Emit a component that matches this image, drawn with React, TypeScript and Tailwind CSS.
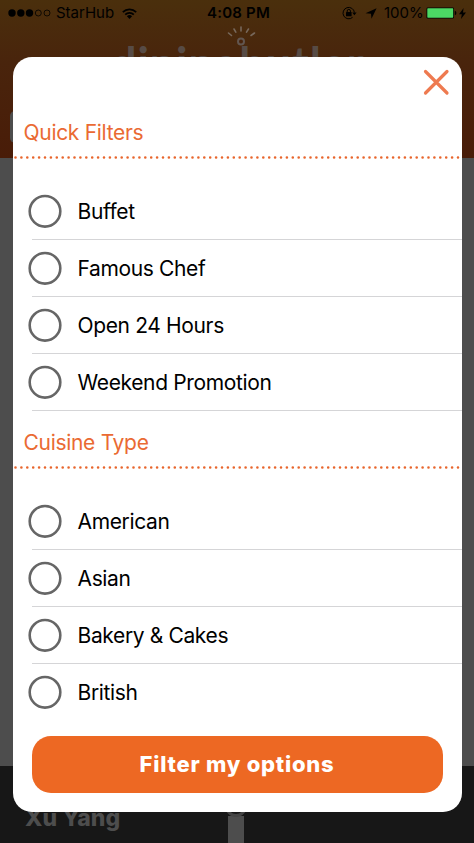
import React, { useState } from "react";

const sections = [
  {
    title: "Quick Filters",
    options: ["Buffet", "Famous Chef", "Open 24 Hours", "Weekend Promotion"],
  },
  {
    title: "Cuisine Type",
    options: ["American", "Asian", "Bakery & Cakes", "British"],
  },
];

function StatusBar() {
  return (
    <div className="flex h-[26px] w-full items-center pl-2 pr-1.5 text-[15px] text-black">
      <svg width="43" height="10" viewBox="0 0 43 10" className="shrink-0">
        <circle cx="4" cy="5" r="3.7" />
        <circle cx="12.8" cy="5" r="3.7" />
        <circle cx="21.5" cy="5" r="3.7" />
        <circle cx="30.3" cy="5" r="3" fill="none" stroke="black" strokeWidth="0.8" />
        <circle cx="39" cy="5" r="3" fill="none" stroke="black" strokeWidth="0.8" />
      </svg>
      <span className="ml-[5px] w-[58px] whitespace-nowrap">StarHub</span>
      <svg width="15" height="11" viewBox="0 0 15 11" className="ml-2 shrink-0">
        <g fill="none" stroke="black" strokeWidth="1.7">
          <path d="M0.8 4.2 A9.5 9.5 0 0 1 14.2 4.2" />
          <path d="M3.2 6.7 A6 6 0 0 1 11.8 6.7" />
        </g>
        <path d="M4.9 8.2 A3.7 3.7 0 0 1 10.1 8.2 L7.5 10.9 Z" />
      </svg>
      <span className="ml-[70px] w-[65px] whitespace-nowrap font-semibold tracking-[0.2px]">
        4:08 PM
      </span>
      <svg width="15" height="14" viewBox="0 0 15 14" className="ml-[70px] shrink-0">
        <path
          d="M12.4 6.5 A5.7 5.7 0 1 0 10.6 11.3"
          fill="none"
          stroke="black"
          strokeWidth="1"
        />
        <path d="M10.2 6.5 H14.6 L12.4 9.2 Z" />
        <rect x="4" y="6" width="5.6" height="4.3" rx="0.5" />
        <path d="M5.2 6 V5 A1.6 1.6 0 0 1 8.4 5 V6" fill="none" stroke="black" strokeWidth="1" />
      </svg>
      <svg width="12" height="11" viewBox="0 0 12 11" className="ml-2 shrink-0">
        <path d="M11.6 0.3 L6.5 10.8 L6 5.7 L0.5 5.2 Z" />
      </svg>
      <span className="ml-[7px] w-[38px] whitespace-nowrap">100%</span>
      <svg width="31" height="12" viewBox="0 0 31 12" className="ml-1 shrink-0">
        <rect x="0.5" y="0.5" width="27.5" height="11" rx="1.2" />
        <rect x="1.3" y="1.3" width="25.9" height="9.4" rx="0.6" fill="#4cd964" />
        <path d="M28.8 3.8 A2.3 2.3 0 0 1 28.8 8.2 Z" />
      </svg>
      <svg width="7" height="11" viewBox="0 0 7 11" className="ml-0.5 shrink-0">
        <path d="M4.6 0 L0 6.2 H2.8 L2 11 L7 4.6 H4 Z" />
      </svg>
    </div>
  );
}

function Logo() {
  return (
    <div className="relative mx-auto mt-3 h-[50px] w-[252px] whitespace-nowrap text-center text-[#574b45]">
      <span className="font-['Lato'] text-[45px] font-bold leading-[50px] tracking-[0.9px]">
        diningbutler
      </span>
      {/* Bell on top of the "b" */}
      <svg
        width="32"
        height="24"
        viewBox="0 0 32 24"
        className="absolute left-[114px] -top-[13px]"
      >
        <g stroke="#77685b" strokeWidth="1.6" strokeLinecap="round">
          <path d="M3.5 8 L6.5 10.5" />
          <path d="M9 4 L10.8 7.2" />
          <path d="M16 2 V6" />
          <path d="M23.5 4 L21.5 7.2" />
          <path d="M29.5 8 L26 10.5" />
        </g>
        <circle cx="16" cy="16.5" r="3" fill="#48230b" stroke="#62564f" strokeWidth="2" />
      </svg>
    </div>
  );
}

function FilterOption({
  label,
  checked,
  divider,
  onToggle,
}: {
  label: string;
  checked: boolean;
  divider: boolean;
  onToggle: () => void;
}) {
  return (
    <button
      type="button"
      onClick={onToggle}
      className="flex h-[57px] w-full flex-col pl-[15px] text-left"
    >
      <span className="flex w-full flex-1 items-center">
        <svg width="34" height="34" viewBox="0 0 34 34" className="shrink-0">
          <circle
            cx="17"
            cy="17.3"
            r="15.3"
            fill={checked ? "#ed6823" : "white"}
            stroke="#666"
            strokeWidth="2.6"
          />
        </svg>
        <span className="ml-4 pt-0.5 text-[21px] tracking-[-0.36px] text-black">{label}</span>
      </span>
      <span
        className={`ml-1 h-px w-full ${divider ? "bg-[#d5d5d7]" : "bg-transparent"}`}
      />
    </button>
  );
}

export default function App() {
  const [selected, setSelected] = useState<string[]>([]);

  const toggle = (option: string) => {
    setSelected((prev) =>
      prev.includes(option) ? prev.filter((o) => o !== option) : [...prev, option]
    );
  };

  return (
    <div className="relative flex h-[843px] w-[474px] flex-col overflow-hidden bg-[#4d4d4d] font-['Inter',sans-serif]">
      {/* Dimmed page */}
      <div className="h-[158px] shrink-0 bg-linear-to-b from-[#4a2f0c] via-[#49240c] via-40% to-[#491c08]">
        <StatusBar />
        <Logo />
        <div className="ml-[10px] mr-[60px] mt-[23px] h-8 rounded-[5px] bg-[#4d4d4d]" />
      </div>
      <div className="flex-1" />
      <div className="flex h-[77px] shrink-0 items-end bg-[#171717]">
        <span className="w-[228px] pb-[9px] pl-[25px] text-[23px] font-extrabold leading-[32px] tracking-[0.1px] text-[#4d4d4d]">
          Xu Yang
        </span>
        <svg width="24" height="34" viewBox="0 0 24 34" className="-ml-[4px]">
          <rect x="4" y="7" width="16" height="27" fill="#4d4d4d" />
          <circle cx="12" cy="-3" r="9.5" fill="#171717" stroke="#444" strokeWidth="3" />
        </svg>
      </div>

      {/* Filter dialog */}
      <div className="absolute inset-x-0 top-[57px] mx-[12.5px] flex h-[754.5px] flex-col overflow-hidden rounded-[19px] bg-white">
        <button type="button" aria-label="Close" className="ml-auto mr-3 mt-3 size-[27px]">
          <svg width="27" height="27" viewBox="0 0 27 27">
            <path
              d="M2.5 2.5 L24 24 M24 2.5 L2.5 24"
              stroke="#ee7a50"
              strokeWidth="3.2"
              strokeLinecap="round"
            />
          </svg>
        </button>
        {sections.map((section, s) => (
          <div key={section.title}>
            <h2
              className={`pl-[11px] text-[21px] leading-[30px] tracking-[-0.3px] text-[#ea6a33] ${
                s === 0 ? "pt-[22px]" : "pt-[17px]"
              }`}
            >
              {section.title}
            </h2>
            <svg width="449" height="3" className="mt-2">
              <path
                d="M2.5 1.5 H449"
                stroke="#e8652c"
                strokeWidth="2.6"
                strokeLinecap="round"
                strokeDasharray="0 5.9"
              />
            </svg>
            <div className="pt-6">
              {section.options.map((option, i) => (
                <FilterOption
                  key={option}
                  label={option}
                  checked={selected.includes(option)}
                  divider={s === 0 || i < section.options.length - 1}
                  onToggle={() => toggle(option)}
                />
              ))}
            </div>
          </div>
        ))}
        <button
          type="button"
          className="mx-[19px] mb-[19px] mt-auto h-[57px] shrink-0 rounded-[19px] bg-[#ed6823] text-[22px] font-extrabold tracking-[0.75px] text-white"
        >
          Filter my options
        </button>
      </div>
    </div>
  );
}
